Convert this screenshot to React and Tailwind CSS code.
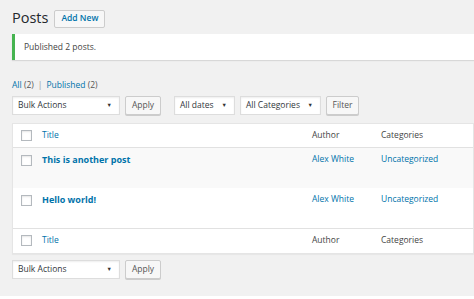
import React from 'react';

const font = { fontFamily: '"Open Sans", "Noto Sans", sans-serif' };

const Select = ({ label, width }) => (
  <div className={`flex items-center justify-between h-[19px] ${width} bg-white border border-[#ddd] shadow-[inset_0_1px_2px_rgba(0,0,0,0.07)] pl-[5px] pr-[7px] text-[8.5px] text-[#32373c]`}>
    <span>{label}</span>
    <span className="text-[5.5px] text-[#333]">▼</span>
  </div>
);

const Button = ({ label, width }) => (
  <div className={`flex items-center justify-center h-[19px] ${width} bg-[#f7f7f7] border border-[#ccc] rounded-[2px] shadow-[0_1px_0_#ccc] text-[8.5px] text-[#555]`}>
    {label}
  </div>
);

const Check = () => <div className="w-[11px] h-[11px] border border-[#b4b9be] bg-white shadow-[inset_0_1px_2px_rgba(0,0,0,0.1)]" />;

const App = () => {
  const posts = [
    { title: 'This is another post', author: 'Alex White', cat: 'Uncategorized', bg: 'bg-[#f9f9f9]' },
    { title: 'Hello world!', author: 'Alex White', cat: 'Uncategorized', bg: 'bg-white' },
  ];

  return (
    <div className="w-[474px] h-[299px] bg-[#f1f1f1] overflow-hidden flex flex-col" style={font}>
      <div className="flex-1 pl-[12px]">
        {/* heading */}
        <div className="flex items-center gap-[6px] pt-[9px] h-[28px]">
          <h1 className="text-[14.5px] text-[#23282d] leading-none">Posts</h1>
          <div className="flex items-center h-[18px] px-[6px] border border-[#ccc] rounded-[2px] bg-[#f7f7f7] text-[8.5px] font-semibold text-[#0073aa]">Add New</div>
        </div>

        {/* notice */}
        <div className="mt-[6px] h-[26px] flex items-center bg-white border-l-[3px] border-[#46b450] shadow-[0_1px_1px_rgba(0,0,0,0.1)] pl-[9px] text-[8.5px] text-[#444]">
          Published 2 posts.
        </div>

        {/* views */}
        <div className="mt-[21px] text-[8.5px] text-[#666] leading-none flex gap-[4px]">
          <span className="text-[#0073aa]">All <span className="text-[#555]">(2)</span></span>
          <span className="text-[#999]">|</span>
          <span className="text-[#0073aa]">Published <span className="text-[#555]">(2)</span></span>
        </div>

        {/* top tablenav */}
        <div className="mt-[6px] flex items-center">
          <Select label="Bulk Actions" width="w-[108px]" />
          <div className="ml-[5px]"><Button label="Apply" width="w-[36px]" /></div>
          <div className="ml-[13px]"><Select label="All dates" width="w-[61px]" /></div>
          <div className="ml-[5px]"><Select label="All Categories" width="w-[81px]" /></div>
          <div className="ml-[5px]"><Button label="Filter" width="w-[33px]" /></div>
        </div>

        {/* table */}
        <div className="mt-[8px] bg-white border border-[#e5e5e5] shadow-[0_1px_1px_rgba(0,0,0,0.04)] text-[8.5px]">
          <div className="flex items-center h-[24px] border-b border-[#e1e1e1]">
            <div className="w-[29px] pl-[8px]"><Check /></div>
            <div className="w-[270px] text-[#0073aa]">Title</div>
            <div className="w-[69px] text-[#444]">Author</div>
            <div className="text-[#444]">Categories</div>
          </div>
          {posts.map((p) => (
            <div key={p.title} className={`flex items-start h-[40px] pt-[5px] ${p.bg}`}>
              <div className="w-[29px] pl-[8px] pt-[2px]"><Check /></div>
              <div className="w-[270px] text-[#0073aa] font-bold text-[9px]">{p.title}</div>
              <div className="w-[69px] text-[#0073aa]">{p.author}</div>
              <div className="text-[#0073aa]">{p.cat}</div>
            </div>
          ))}
          <div className="flex items-center h-[25px] border-t border-[#e1e1e1]">
            <div className="w-[29px] pl-[8px]"><Check /></div>
            <div className="w-[270px] text-[#0073aa]">Title</div>
            <div className="w-[69px] text-[#444]">Author</div>
            <div className="text-[#444]">Categories</div>
          </div>
        </div>

        {/* bottom tablenav */}
        <div className="mt-[6px] flex items-center">
          <Select label="Bulk Actions" width="w-[108px]" />
          <div className="ml-[5px]"><Button label="Apply" width="w-[36px]" /></div>
        </div>
      </div>
      <div className="h-[3px] bg-white" />
    </div>
  );
};

export default App;
